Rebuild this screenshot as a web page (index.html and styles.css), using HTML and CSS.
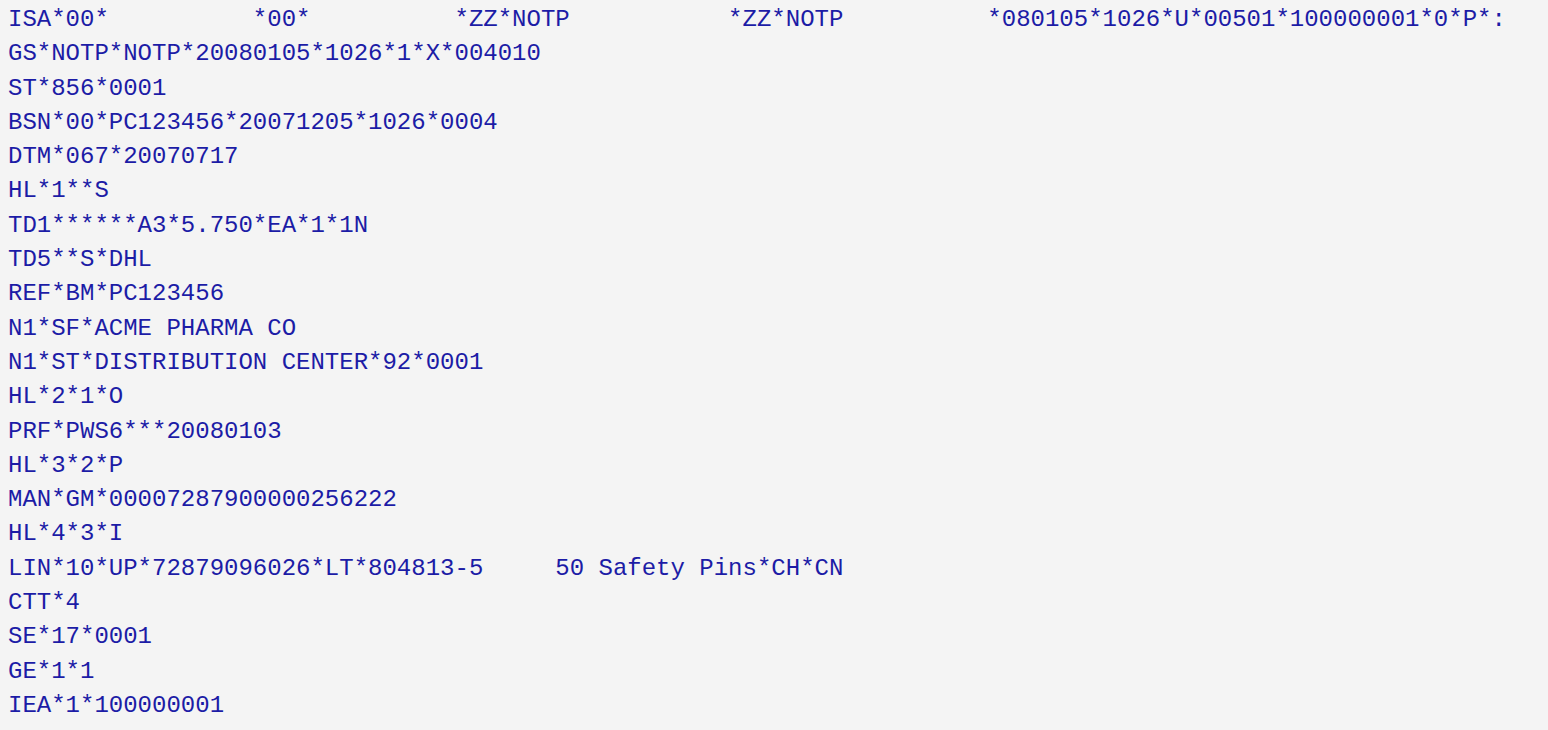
FILE: index.html
```html
<!DOCTYPE html>
<html>
<head>
<meta charset="utf-8">
<link rel="stylesheet" href="styles.css">
</head>
<body>
<pre class="edi">ISA*00*          *00*          *ZZ*NOTP           *ZZ*NOTP          *080105*1026*U*00501*100000001*0*P*:
GS*NOTP*NOTP*20080105*1026*1*X*004010
ST*856*0001
BSN*00*PC123456*20071205*1026*0004
DTM*067*20070717
HL*1**S
TD1******A3*5.750*EA*1*1N
TD5**S*DHL
REF*BM*PC123456
N1*SF*ACME PHARMA CO
N1*ST*DISTRIBUTION CENTER*92*0001
HL*2*1*O
PRF*PWS6***20080103
HL*3*2*P
MAN*GM*00007287900000256222
HL*4*3*I
LIN*10*UP*72879096026*LT*804813-5     50 Safety Pins*CH*CN
CTT*4
SE*17*0001
GE*1*1
IEA*1*100000001</pre>
</body>
</html>
```

FILE: styles.css
```css
html, body {
  margin: 0;
  padding: 0;
  background: #f4f4f4;
}
.edi {
  margin: 0;
  padding: 3px 8px;
  font-family: "Courier New", Courier, "Nimbus Mono PS", "FreeMono", "Liberation Mono", monospace;
  font-size: 24px;
  line-height: 34.3px;
  color: #1c1ca6;
  white-space: pre;
}
```
